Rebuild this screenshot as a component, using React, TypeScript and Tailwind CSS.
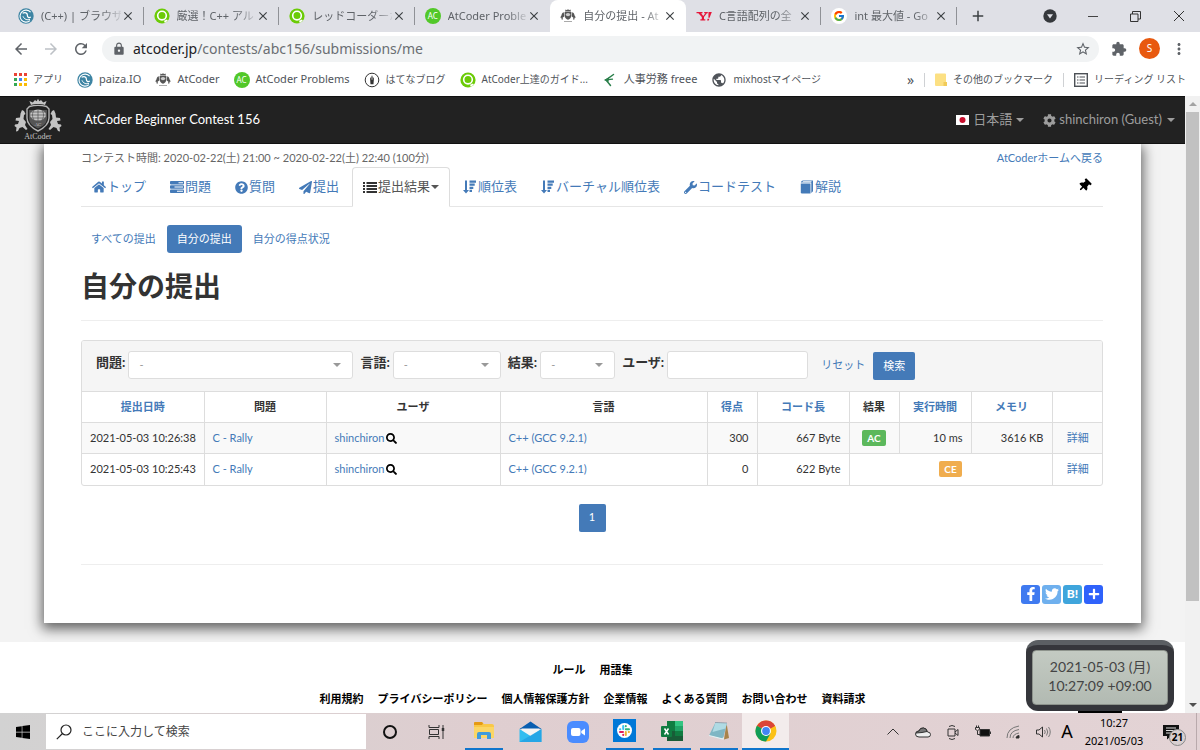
import type { ReactNode } from "react";
import { FaCog, FaHome, FaPaperPlane, FaPlus, FaQuestionCircle, FaSearch, FaTwitter, FaFacebookF, FaWindows, FaWrench, FaThumbtack } from "react-icons/fa";
import { FcGoogle } from "react-icons/fc";
import { MdArrowBack, MdArrowForward, MdClose, MdExtension, MdLock, MdMoreVert, MdRefresh, MdStarBorder, MdPublic, MdAdd } from "react-icons/md";

/* ---------- small drawings ---------- */

function PaizaIcon() {
  return (
    <svg viewBox="0 0 16 16" className="size-4 shrink-0" aria-hidden="true">
      <circle cx="8" cy="8" r="7.7" fill="#3d84a3" />
      <path d="M12.600 4.200A6 6 0 1 0 12 12.600" fill="none" stroke="#fff" strokeWidth="1.100" />
      <path d="M4.600 5.300C7 3.800 9.600 4.800 9.400 7.400c-.1 2 1.400 2.600 3.400 1.800" fill="none" stroke="#fff" strokeWidth="1.300" />
      <path d="M5 8.300c1.200 3 4.200 4.200 7 3" fill="none" stroke="#fff" strokeWidth="1" />
    </svg>
  );
}

function GreenRingIcon() {
  return (
    <svg viewBox="0 0 16 16" className="size-4 shrink-0" aria-hidden="true">
      <circle cx="8" cy="8" r="7.600" fill="#6bcb06" />
      <circle cx="8" cy="7.600" r="4.300" fill="none" stroke="#fff" strokeWidth="1.600" />
      <path d="M10 12.800l3-1.200.8 1.200-3 2.200z" fill="#fff" />
    </svg>
  );
}

function AcIcon() {
  return (
    <span className="flex size-4 shrink-0 items-center justify-center rounded-full bg-[#52c829] text-[8px] leading-none text-white">AC</span>
  );
}

function YahooIcon() {
  return (
    <svg viewBox="0 0 16 16" className="size-4 shrink-0" aria-hidden="true" fill="#e6163a">
      <path d="M.5 4h6v1.200H5.200L7.200 8l2.200-2.800H8.200V4h3.600v1.200h-.9L8 8.900v2.300h1.300v1.200H4.400v-1.200h1.400V8.900L2.400 5.200H.5z" />
      <path d="M12.500 4h3.300l-2.200 5.800h-1.200z" />
      <path d="M11.600 10.700h1.700l-.5 1.700h-1.700z" />
    </svg>
  );
}

function CrestIcon() {
  return (
    <svg viewBox="0 0 16 16" className="size-4 shrink-0" aria-hidden="true" fill="#555">
      <path d="M5 3.400L5.600 1.600 7 2.200 8 1l1 1.200 1.400-.6.6 1.800z" />
      <path d="M4.600 4h6.800v3.400c0 2.400-1.800 3.800-3.400 4.400-1.600-.6-3.400-2-3.400-4.400z" />
      <ellipse cx="8" cy="6.600" rx="2.200" ry="1.600" fill="#ccc" />
      <path d="M3.800 4.200c-1.800.2-2 2-2.400 3.200L.2 9.600l1.200.2.2 1.800 1.400-.2-.4-1.600 1.600-1.400zM12.200 4.200c1.800.2 2 2 2.400 3.200l1.200 2.200-1.200.2-.2 1.800-1.400-.2.4-1.600-1.600-1.400z" />
      <path d="M4 13h8v1H4z" fill="#aaa" />
    </svg>
  );
}

function PenIcon() {
  return (
    <svg viewBox="0 0 16 16" className="size-4 shrink-0" aria-hidden="true">
      <circle cx="8" cy="8" r="6.800" fill="none" stroke="#333" strokeWidth="1" />
      <path d="M8 3.200l1.900 3.400-.4 5.600h-3l-.4-5.600z" fill="#333" />
      <path d="M8 3.600v4.200" stroke="#fff" strokeWidth=".7" />
    </svg>
  );
}

function FreeeIcon() {
  return (
    <svg viewBox="0 0 16 16" className="size-4 shrink-0" aria-hidden="true" fill="none" stroke="#2a7f4a" strokeLinecap="round">
      <path d="M11.500 2.500L4 8l4.500 5.500" strokeWidth="1.500" />
      <path d="M4 7.800l6.500-.6" strokeWidth="1.200" />
      <path d="M1.800 8L7 5.600 6.500 10z" fill="#2a7f4a" stroke="none" />
    </svg>
  );
}

function AppsIcon() {
  const colors = ["#ea4335", "#ea4335", "#ea4335", "#34a853", "#4285f4", "#fbbc05", "#34a853", "#fbbc05", "#fbbc05"];
  return (
    <svg viewBox="0 0 13 13" className="size-[13px] shrink-0" aria-hidden="true">
      {colors.map((c, i) => (
        <rect key={i} x={(i % 3) * 5} y={Math.floor(i / 3) * 5} width="3" height="3" fill={c} />
      ))}
    </svg>
  );
}

function AtCoderLogo() {
  return (
    <svg viewBox="0 0 48 44" className="h-11 w-12" role="img" aria-label="AtCoder" fill="#c4c4c4">
      <path d="M17 7l-1.600-4 3.400 1.600L21 2l1.600 1.200L24 .8l1.400 2.400L27 2l2.200 2.600L32.600 3 31 7c-4-1.200-10-1.200-14 0z" />
      <path d="M15.500 8.500c5-1.300 12-1.300 17 0l2.500 2.500v9c0 7-6 10.500-11 13-5-2.500-11-6-11-13v-9z" fill="#222" stroke="#b5b5b5" strokeWidth="1.400" />
      <path d="M15 12h18v8c0 6-5 8.500-9 10.500-4-2-9-4.500-9-10.500z" fill="#555" />
      <ellipse cx="24" cy="17" rx="8" ry="5.600" />
      <path d="M16 17h16M17 14h14M17 20h14M24 11v12M20 12c-2 3-2 7 0 10M28 12c2 3 2 7 0 10" fill="none" stroke="#444" strokeWidth=".6" />
      <text x="24" y="28" textAnchor="middle" fontSize="5" fontFamily="Liberation Serif, serif" fontStyle="italic">AC</text>
      <path d="M8 12l2 1 1.500 3-1.500 1-.5 4 2.500 3-1 3 2.500 4-1.500 1-3.500-3-3 1-1.500 3-2 .5.500-4L.5 28l.5-1.500L4 26l1-3-3.500-.5L2 20l4-.5.500-4z" />
      <path d="M40 12l-2 1-1.500 3 1.500 1 .5 4-2.500 3 1 3-2.500 4 1.500 1 3.500-3 3 1 1.500 3 2 .5-.5-4 2-1.500-.5-1.500-3-.5-1-3 3.500-.5-.5-2.500-4-.5-.5-4z" />
      <text x="24" y="41" textAnchor="middle" fontSize="8" fontFamily="Liberation Serif, serif">AtCoder</text>
    </svg>
  );
}

function TasksIcon() {
  return (
    <svg viewBox="0 0 14 12" className="h-3 w-3.5" aria-hidden="true" fill="currentColor">
      <rect width="14" height="3.400" rx=".8" />
      <rect y="4.300" width="14" height="3.400" rx=".8" />
      <rect y="8.600" width="14" height="3.400" rx=".8" />
      <path d="M8.500 1.200H13v1H8.500zM4.500 5.500H13v1H4.500zM7 9.800h6v1H7z" fill="#fff" />
    </svg>
  );
}

function ListIcon() {
  return (
    <svg viewBox="0 0 14 13" className="h-[13px] w-3.5" aria-hidden="true" fill="currentColor">
      <path d="M0 1h2v2H0zM0 4h2v2H0zM0 7h2v2H0zM0 10h2v2H0zM3.500 1H14v2H3.500zM3.500 4H14v2H3.500zM3.500 7H14v2H3.500zM3.500 10H14v2H3.500z" />
    </svg>
  );
}

function SortIcon() {
  return (
    <svg viewBox="0 0 14 14" className="size-3.5" aria-hidden="true" fill="currentColor">
      <path d="M2 .5h2V10h2L3 13.500 0 10h2zM6.500.5H13v2.200H6.500zM6.500 3.600h5.200v2.200H6.500zM6.500 6.700h3.800v2.200H6.500zM6.500 9.800H9V12H6.500z" />
    </svg>
  );
}

function BookIcon() {
  return (
    <svg viewBox="0 0 14 14" className="size-3.5" aria-hidden="true" fill="currentColor">
      <path d="M.8 3.400h9.700v10.100H2Q.8 13.500.8 12.300z" />
      <path d="M.8 2.600Q1.400.5 3 .5h10v10.700l-1.700 1.700V2.600z" />
      <path d="M2.200 2.300L3.200 1.300h8.600L11 2.300z" fill="#fff" />
    </svg>
  );
}

function Caret() {
  return (
    <svg viewBox="0 0 8 4" className="h-1 w-2 shrink-0" aria-hidden="true" fill="currentColor">
      <path d="M0 0h8L4 4z" />
    </svg>
  );
}

/* ---------- browser ---------- */

type Tab = { icon: ReactNode; title: string; active?: boolean };

const tabs: Tab[] = [
  { icon: <PaizaIcon />, title: "(C++) | ブラウザ" },
  { icon: <GreenRingIcon />, title: "厳選！C++ アル" },
  { icon: <GreenRingIcon />, title: "レッドコーダーが教" },
  { icon: <AcIcon />, title: "AtCoder Proble" },
  { icon: <CrestIcon />, title: "自分の提出 - At", active: true },
  { icon: <YahooIcon />, title: "C言語配列の全" },
  { icon: <span className="shrink-0 rounded-full bg-white p-0.5"><FcGoogle className="size-3" /></span>, title: "int 最大値 - Go" },
];

function TabStrip() {
  return (
    <div className="flex h-8 items-stretch bg-[#dfe0e6] pl-2">
      <div className="flex w-[949px] min-w-0" role="tablist">
        {tabs.map((t, i) => (
          <div
            key={i}
            role="tab"
            aria-selected={!!t.active}
            className={
              "flex min-w-0 flex-1 items-center pl-2.5 " +
              (t.active ? "rounded-t-lg bg-white" : "")
            }
          >
            {t.icon}
            <span className="ml-[7px] min-w-0 flex-1 overflow-hidden text-[11px] whitespace-nowrap text-[#5f6368] [mask-image:linear-gradient(to_right,#000_75%,rgba(0,0,0,0.15))]">
              {t.title}
            </span>
            <button aria-label="閉じる" className="mr-2 flex size-3.5 items-center justify-center text-[#3c4043]">
              <MdClose className="size-3.5" />
            </button>
            <span className={"h-[18px] w-px " + (t.active || i === 3 ? "bg-transparent" : "bg-[#8f9196]")} />
          </div>
        ))}
      </div>
      <button aria-label="新しいタブ" className="ml-3 text-[#3c4043]">
        <MdAdd className="size-[18px]" />
      </button>
      <div className="ml-auto flex items-center">
        <button aria-label="タブを検索" className="mr-3.5">
          <svg viewBox="0 0 14 14" className="size-3.5">
            <circle cx="7" cy="7" r="6.700" fill="#35383c" />
            <path d="M4 5.300h6L7 9.400z" fill="#dfe0e6" />
          </svg>
        </button>
        <button aria-label="最小化" className="flex h-7 w-[43px] items-center justify-center">
          <span className="h-px w-2.5 bg-[#444]" />
        </button>
        <button aria-label="元に戻す" className="flex h-7 w-[43px] items-center justify-center">
          <svg viewBox="0 0 11 11" className="size-[11px]" fill="none" stroke="#333">
            <path d="M.5 3h7.500v7.500H.5zM2.500 3V.5h8V8H8" />
          </svg>
        </button>
        <button aria-label="閉じる" className="flex h-7 w-[43px] items-center justify-center">
          <svg viewBox="0 0 10 10" className="size-2.5" fill="none" stroke="#333">
            <path d="M0 0l10 10M10 0L0 10" />
          </svg>
        </button>
      </div>
    </div>
  );
}

function Toolbar() {
  return (
    <div className="flex h-[33px] items-center bg-white px-3 text-[#5f6368]">
      <button aria-label="戻る" className="mr-3"><MdArrowBack className="size-[18px]" /></button>
      <button aria-label="進む" className="mr-3 text-[#bdc1c6]"><MdArrowForward className="size-[18px]" /></button>
      <button aria-label="再読み込み" className="mr-3"><MdRefresh className="size-[18px]" /></button>
      <div className="flex h-[26px] flex-1 items-center rounded-full bg-[#f1f3f4] pr-2 pl-2.5">
        <MdLock className="size-3.5" />
        <a href="#url" className="ml-[7px] text-sm text-[#6a6e73]">
          <span className="text-[#202124]">atcoder.jp</span>/contests/abc156/submissions/me
        </a>
        <button aria-label="ブックマークに追加" className="ml-auto"><MdStarBorder className="size-4" /></button>
      </div>
      <button aria-label="拡張機能" className="ml-3"><MdExtension className="size-4" /></button>
      <button className="ml-3 flex size-[21px] items-center justify-center rounded-full bg-[#e8590f] text-[10px] text-white">S</button>
      <button aria-label="メニュー" className="ml-2.5"><MdMoreVert className="size-[18px]" /></button>
    </div>
  );
}

function Bookmark({ icon, small, children }: { icon: ReactNode; small?: boolean; children: ReactNode }) {
  return (
    <a href="#bookmark" className={"flex shrink-0 items-center gap-1.5 whitespace-nowrap " + (small ? "text-[10px]" : "text-[11px]")}>
      {icon}
      {children}
    </a>
  );
}

function BookmarkBar() {
  return (
    <div className="flex h-[31px] items-center bg-white pr-3.5 pb-0.5 pl-3.5 text-[#50545a]">
      <div className="flex min-w-0 flex-1 items-center gap-3.5 overflow-hidden">
        <Bookmark small icon={<AppsIcon />}>アプリ</Bookmark>
        <Bookmark icon={<PaizaIcon />}>paiza.IO</Bookmark>
        <Bookmark icon={<CrestIcon />}>AtCoder</Bookmark>
        <Bookmark icon={<AcIcon />}>AtCoder Problems</Bookmark>
        <Bookmark small icon={<PenIcon />}>はてなブログ</Bookmark>
        <Bookmark small icon={<GreenRingIcon />}>AtCoder上達のガイド...</Bookmark>
        <Bookmark icon={<FreeeIcon />}>人事労務 freee</Bookmark>
        <Bookmark small icon={<MdPublic className="size-4" />}>mixhostマイページ</Bookmark>
      </div>
      <span className="mr-2.5 text-sm">»</span>
      <div className="flex items-center gap-2.5">
        <span className="h-3.5 w-px bg-[#cfd1d4]" />
        <Bookmark
          small
          icon={
            <svg viewBox="0 0 12 14" className="h-3.5 w-3">
              <path d="M0 1.500Q0 .5 1 .5h9q1 0 1 1V9h1v4H1q-1 0-1-1z" fill="#fce083" />
              <path d="M8.500 9H12v4H8.500z" fill="#f1cb58" />
            </svg>
          }
        >
          その他のブックマーク
        </Bookmark>
        <span className="h-3.5 w-px bg-[#cfd1d4]" />
        <Bookmark
          small
          icon={
            <svg viewBox="0 0 14 14" className="size-3.5" fill="none" stroke="#4d5156">
              <rect x=".7" y=".7" width="12.600" height="12.600" strokeWidth="1.400" />
              <path d="M3 4h1.500M3 7h1.500M3 10h1.500M5.500 4H11M5.500 7H11M5.500 10H11" strokeWidth="1.200" />
            </svg>
          }
        >
          リーディング リスト
        </Bookmark>
      </div>
    </div>
  );
}

/* ---------- site ---------- */

function SiteHeader() {
  return (
    <header className="flex h-12 shrink-0 items-center border-y border-[#111] bg-[#222] pr-2.5 pl-3.5">
      <a href="#home"><AtCoderLogo /></a>
      <a href="#contest" className="ml-[22px] text-[13px] text-white">AtCoder Beginner Contest 156</a>
      <div className="ml-auto flex items-center gap-[19px] text-[13px] text-[#9d9d9d]">
        <button className="flex items-center gap-1">
          <svg viewBox="0 0 13 10" className="h-2.5 w-[13px]">
            <rect width="13" height="10" fill="#fff" />
            <circle cx="6.500" cy="5" r="3" fill="#c8102e" />
          </svg>
          日本語
          <Caret />
        </button>
        <button className="flex items-center gap-[3px]">
          <FaCog className="size-[13px]" />
          shinchiron (Guest)
          <span className="ml-0.5 flex"><Caret /></span>
        </button>
      </div>
    </header>
  );
}

const menu: { icon: ReactNode; label: string; active?: boolean }[] = [
  { icon: <FaHome className="size-3.5" />, label: "トップ" },
  { icon: <TasksIcon />, label: "問題" },
  { icon: <FaQuestionCircle className="size-[13px]" />, label: "質問" },
  { icon: <FaPaperPlane className="size-[13px]" />, label: "提出" },
  { icon: <ListIcon />, label: "提出結果", active: true },
  { icon: <SortIcon />, label: "順位表" },
  { icon: <SortIcon />, label: "バーチャル順位表" },
  { icon: <FaWrench className="size-[13px]" />, label: "コードテスト" },
  { icon: <BookIcon />, label: "解説" },
];

function ContestMenu() {
  return (
    <nav className="flex h-10 items-end border-b border-[#e6e6e6] text-[13px]">
      {menu.map((m) => (
        <a
          key={m.label}
          href="#menu"
          className={
            "mr-0.5 -mb-px flex h-10 items-center gap-px rounded-t border px-2.5 whitespace-nowrap " +
            (m.active
              ? "border-[#ddd] border-b-white bg-white text-[#555]"
              : "border-transparent text-[#447ab8]")
          }
        >
          <span className={m.active ? "text-[#333]" : "text-[#447ab8]"}>{m.icon}</span>
          {m.label}
          {m.active && <Caret />}
        </a>
      ))}
      <button aria-label="固定" className="mr-3 mb-3.5 ml-auto text-black">
        <FaThumbtack className="size-[13px] rotate-45" />
      </button>
    </nav>
  );
}

function FilterSelect({ id, label, width }: { id: string; label: string; width: string }) {
  return (
    <div className="flex items-start gap-[3px]">
      <label htmlFor={id} className="pt-0.5 text-[13px] font-bold">{label}:</label>
      <div className={"relative " + width}>
        <select id={id} className="h-7 w-full appearance-none rounded-[3px] border border-[#ddd] bg-white pl-2.5 text-[11px] text-[#999]">
          <option>-</option>
        </select>
        <span className="pointer-events-none absolute inset-y-0 right-3 flex items-center text-[#999]"><Caret /></span>
      </div>
    </div>
  );
}

function Filters() {
  return (
    <form className="flex h-[50px] items-start gap-[7px] bg-[#f5f5f5] pt-2.5 pl-3.5" onSubmit={(e) => e.preventDefault()}>
      <FilterSelect id="task" label="問題" width="w-[225px]" />
      <FilterSelect id="language" label="言語" width="w-[108px]" />
      <FilterSelect id="status" label="結果" width="w-[75px]" />
      <div className="flex items-start gap-[3px]">
        <label htmlFor="user" className="pt-0.5 text-[13px] font-bold">ユーザ:</label>
        <input id="user" type="text" className="h-7 w-[141px] rounded-[3px] border border-[#ddd] bg-white px-2 text-[11px]" />
      </div>
      <a href="#reset" className="ml-1.5 pt-1.5 text-[11px] text-[#447ab8]">リセット</a>
      <button className="mt-px ml-px h-7 rounded-[2px] bg-[#447ab8] px-2.5 text-[11px] text-white">検索</button>
    </form>
  );
}

const cell = "border-l border-[#ddd] px-2 first:border-l-0";

function SubmissionTable() {
  const link = "text-[#447ab8]";
  const heads: [string, boolean][] = [
    ["提出日時", true], ["問題", false], ["ユーザ", false], ["言語", false], ["得点", true],
    ["コード長", true], ["結果", false], ["実行時間", true], ["メモリ", true], ["", false],
  ];
  const rows = [
    { time: "2021-05-03 10:26:38", score: "300", size: "667 Byte", ok: true },
    { time: "2021-05-03 10:25:43", score: "0", size: "622 Byte", ok: false },
  ];
  return (
    <table className="w-full table-fixed text-[11px] whitespace-nowrap">
      <colgroup>
        <col className="w-[122px]" />
        <col className="w-[122px]" />
        <col className="w-[174px]" />
        <col className="w-[207px]" />
        <col className="w-[50px]" />
        <col className="w-[92px]" />
        <col className="w-[50px]" />
        <col className="w-[72px]" />
        <col className="w-[81px]" />
        <col className="w-[51px]" />
      </colgroup>
      <thead>
        <tr className="h-[31px] border-t border-[#ddd]">
          {heads.map(([h, sortable], i) => (
            <th key={i} className={cell}>
              {sortable ? <a href="#sort" className={link}>{h}</a> : h}
            </th>
          ))}
        </tr>
      </thead>
      <tbody>
        {rows.map((r) => (
          <tr key={r.time} className="h-[31px] border-t border-[#ddd] odd:bg-[#f9f9f9]">
            <td className={cell}>{r.time}</td>
            <td className={cell}><a href="#task" className={link}>C - Rally</a></td>
            <td className={cell}>
              <span className="flex items-center gap-0.5">
                <a href="#user" className={link}>shinchiron</a>
                <FaSearch className="size-[11px] text-black" />
              </span>
            </td>
            <td className={cell}><a href="#lang" className={link}>C++ (GCC 9.2.1)</a></td>
            <td className={cell + " text-right"}>{r.score}</td>
            <td className={cell + " text-right"}>{r.size}</td>
            {r.ok ? (
              <>
                <td className={cell + " text-center"}>
                  <span className="inline-block rounded-[2px] bg-[#5cb85c] px-[5px] text-[10px] leading-4 font-bold text-white">AC</span>
                </td>
                <td className={cell + " text-right"}>10 ms</td>
                <td className={cell + " text-right"}>3616 KB</td>
              </>
            ) : (
              <td colSpan={3} className={cell + " text-center"}>
                <span className="inline-block rounded-[2px] bg-[#f0ad4e] px-[5px] text-[10px] leading-4 font-bold text-white">CE</span>
              </td>
            )}
            <td className={cell + " text-center"}><a href="#detail" className={link}>詳細</a></td>
          </tr>
        ))}
      </tbody>
    </table>
  );
}

function Share() {
  const box = "flex size-[19px] items-center justify-center rounded-[3px] text-white";
  return (
    <div className="flex justify-end gap-0.5">
      <a href="#facebook" aria-label="Facebook" className={box + " bg-[#3f7af0]"}><FaFacebookF className="size-3.5" /></a>
      <a href="#twitter" aria-label="Twitter" className={box + " bg-[#6fb0ee]"}><FaTwitter className="size-3.5" /></a>
      <a href="#hatena" className={box + " bg-[#3fa5dc] text-[12px] font-black"}>B!</a>
      <a href="#more" aria-label="共有" className={box + " bg-[#2f62fb]"}><FaPlus className="size-3" /></a>
    </div>
  );
}

function Main() {
  return (
    <main className="mx-11 bg-white pr-[38px] pl-[37px] shadow-[0_4px_12px_2px_rgba(0,0,0,0.6)]">
      <div className="flex h-[23px] items-center justify-between pt-1.5 text-[11px]">
        <span className="text-[#666]">コンテスト時間: 2020-02-22(土) 21:00 ~ 2020-02-22(土) 22:40 (100分)</span>
        <a href="#home" className="text-[#447ab8]">AtCoderホームへ戻る</a>
      </div>
      <ContestMenu />
      <div className="mt-[18px] flex h-7 items-stretch gap-px text-[11px] text-[#447ab8]">
        <a href="#all" className="flex items-center px-2.5">すべての提出</a>
        <a href="#mine" className="flex items-center rounded-[3px] bg-[#447ab8] px-2.5 text-white">自分の提出</a>
        <a href="#score" className="flex items-center px-2.5">自分の得点状況</a>
      </div>
      <h1 className="mt-[15px] text-[28px] leading-9 font-bold text-[#333]">自分の提出</h1>
      <hr className="mt-4 border-[#eee]" />
      <section className="mt-[19px] overflow-hidden rounded-[3px] border border-[#ddd]">
        <Filters />
        <SubmissionTable />
      </section>
      <div className="mt-[18px] flex justify-center">
        <a href="#page" className="flex h-7 w-[27px] items-center justify-center rounded-[2px] bg-[#447ab8] text-[11px] text-white">1</a>
      </div>
      <hr className="mt-8 mb-5 border-[#eee]" />
      <Share />
      <div className="h-[19px]" />
    </main>
  );
}

function Footer() {
  const rows = [
    ["ルール", "用語集"],
    ["利用規約", "プライバシーポリシー", "個人情報保護方針", "企業情報", "よくある質問", "お問い合わせ", "資料請求"],
  ];
  return (
    <footer className="flex-1 bg-white pt-5 text-[11px] font-bold text-black">
      {rows.map((r, i) => (
        <div key={i} className="mb-[11px] flex h-[18px] items-center justify-center gap-3.5">
          {r.map((l) => <a key={l} href="#footer">{l}</a>)}
        </div>
      ))}
    </footer>
  );
}

function DeskClock() {
  return (
    <div className="absolute right-[26px] bottom-0 flex flex-col items-center">
      <div className="rounded-[12px] border-t-[5px] border-[#5b5f63] bg-[#35363b] p-1.5 pt-[5px]">
        <div className="flex h-[55px] w-[136px] flex-col items-center justify-center rounded-[4px] border border-[#8d938c] bg-linear-to-b from-[#c3cac2] to-[#b2bab2] pb-1 text-sm leading-[19px] text-[#444]">
          <span>2021-05-03 (月)</span>
          <span>10:27:09 +09:00</span>
        </div>
      </div>
      <div className="h-0.5 w-11 bg-black" />
    </div>
  );
}

function ScrollBar() {
  return (
    <div className="flex w-[15px] shrink-0 flex-col items-center bg-[#f1f1f1] pt-1.5" aria-hidden="true">
      <svg viewBox="0 0 8 4" className="h-1 w-2" fill="#a3a3a3"><path d="M0 4h8L4 0z" /></svg>
      <div className="mt-1.5 h-4/5 w-[13px] bg-[#c1c1c1]" />
      <span className="mt-auto pb-1.5 text-[#505050]"><Caret /></span>
    </div>
  );
}

/* ---------- taskbar ---------- */

const apps: { name: string; icon: ReactNode; state?: "open" | "active" }[] = [
  { name: "Cortana", icon: <svg viewBox="0 0 16 16" className="size-4"><circle cx="8" cy="8" r="6" fill="none" stroke="#111" strokeWidth="2" /></svg> },
  {
    name: "タスク ビュー",
    icon: (
      <svg viewBox="0 0 17 16" className="h-4 w-[17px]" fill="none" stroke="#333">
        <path d="M1 1v2.500h10V1M1 15v-2.500h10V15M1.500 5.500h9v5h-9zM15 1v3M15 7v8" />
        <path d="M15 4v3" strokeWidth="2.500" />
      </svg>
    ),
  },
  {
    name: "エクスプローラー",
    state: "open",
    icon: (
      <svg viewBox="0 0 22 20" className="h-5 w-[22px]">
        <path d="M1 3q0-2 2-2h6l2 2h8q2 0 2 2v12H1z" fill="#f9c846" />
        <path d="M1 2q0-1 1-1h7l1 1.500-1 1.500H1z" fill="#e59a13" />
        <path d="M1 6h20v11H1z" fill="#fbd665" />
        <path d="M4 18v-5q0-2 2-2h10q2 0 2 2v5h-4v-4H8v4z" fill="#3f9bdc" />
      </svg>
    ),
  },
  {
    name: "メール",
    icon: (
      <svg viewBox="0 0 23 22" className="h-[22px] w-[23px]">
        <path d="M.5 8L11.500.5 22.500 8z" fill="#0a5eb0" />
        <path d="M2.500 7.500h18v9h-18z" fill="#f4f4f4" />
        <path d="M.5 8l11 7 11-7v13H.5z" fill="#32bdf0" />
        <path d="M.5 21l22-13v13z" fill="#1a96e0" opacity=".6" />
      </svg>
    ),
  },
  {
    name: "Zoom",
    icon: (
      <svg viewBox="0 0 22 22" className="size-[22px]">
        <rect width="22" height="22" rx="6" fill="#4a8cff" />
        <rect x="4" y="7" width="9.500" height="8" rx="2" fill="#fff" />
        <path d="M14.300 10L18 7.500v7L14.300 12z" fill="#fff" />
      </svg>
    ),
  },
  {
    name: "Slack",
    state: "open",
    icon: (
      <svg viewBox="0 0 23 23" className="size-[23px]">
        <path d="M0 0h23v23H0z" fill="#0078d7" />
        <circle cx="11.500" cy="11.500" r="7.500" fill="#fff" />
        <g fill="none" strokeWidth="2" strokeLinecap="round">
          <path d="M10.200 7v3M7 10.200h.3" stroke="#36c5f0" />
          <path d="M12.800 10.200H16M12.800 7v.3" stroke="#2eb67d" />
          <path d="M12.800 13v3M16 13h-.3" stroke="#ecb22e" />
          <path d="M7 13h3M10.200 16v-.3" stroke="#e01e5a" />
        </g>
      </svg>
    ),
  },
  {
    name: "Excel",
    state: "open",
    icon: (
      <svg viewBox="0 0 22 20" className="h-5 w-[22px]">
        <path d="M6 0h16v20H6z" fill="#21a366" />
        <path d="M6 0h8v10H6z" fill="#107c41" />
        <path d="M6 10h8v10H6z" fill="#185c37" />
        <path d="M14 0h8v5h-8z" fill="#33c481" />
        <path d="M14 10h8v5h-8z" fill="#107c41" />
        <path d="M14 15h8v5h-8z" fill="#185c37" />
        <rect y="5" width="11" height="11" rx="1" fill="#107c41" />
        <path d="M3.500 7.500l4 6M7.500 7.500l-4 6" stroke="#fff" strokeWidth="1.500" />
      </svg>
    ),
  },
  {
    name: "メモ帳",
    state: "open",
    icon: (
      <svg viewBox="0 0 22 20" className="h-5 w-[22px]">
        <path d="M18.500 2l2.500 15-5 1.500z" fill="#a8834a" />
        <path d="M7.500 1.500l11.500.5-4 16L1 14.500z" fill="#7fb6c4" />
        <path d="M7.500 1.500l11.500.5-1.500 5.500L4.500 11z" fill="#b0dbe4" />
        <path d="M1 14.500l14 3.500.5-1.500" fill="none" stroke="#e2f1f3" strokeWidth="1.200" />
        <path d="M7.500 1.500l11.500.5" stroke="#778" strokeDasharray="1 1" />
      </svg>
    ),
  },
  {
    name: "Chrome",
    state: "active",
    icon: (
      <svg viewBox="0 0 22 22" className="size-[22px]">
        <circle cx="11" cy="11" r="10.500" fill="#fbc116" />
        <path d="M11 11L1.900 5.750A10.500 10.500 0 0 1 20.100 5.750z" fill="#db4437" />
        <path d="M20.100 5.750H11v5z" fill="#db4437" />
        <path d="M1.900 5.750A10.500 10.500 0 0 0 11 21.500l4.500-8L11 11z" fill="#0f9d58" />
        <circle cx="11" cy="11" r="5" fill="#fff" />
        <circle cx="11" cy="11" r="3.900" fill="#4285f4" />
      </svg>
    ),
  },
];

function TrayIcon({ label, children }: { label: string; children: ReactNode }) {
  return (
    <button aria-label={label} className="flex w-[30px] items-center justify-center">
      <svg viewBox="0 0 16 16" className="size-4" fill="none" stroke="#333">{children}</svg>
    </button>
  );
}

function TaskBar() {
  return (
    <div className="flex h-[37px] shrink-0 items-stretch bg-linear-to-r from-[#d2d2d2] via-[#dfced0] via-40% to-[#e3d3d5] text-black">
      <button aria-label="スタート" className="flex w-[46px] items-center justify-center">
        <FaWindows className="size-4" />
      </button>
      <label className="my-px flex w-80 items-center gap-2.5 bg-white px-2.5">
        <svg viewBox="0 0 16 16" className="size-4" fill="none" stroke="#222" strokeWidth="1.200">
          <circle cx="10" cy="6" r="5" />
          <path d="M6.500 9.500L.8 15.200" />
        </svg>
        <input type="text" aria-label="検索" placeholder="ここに入力して検索" className="min-w-0 flex-1 text-[12px] outline-none placeholder:text-[#444]" />
      </label>
      {apps.map((a) => (
        <button
          key={a.name}
          aria-label={a.name}
          className={"flex w-[47px] flex-col items-center justify-between " + (a.state === "active" ? "bg-[#f3ecec]" : "")}
        >
          <span className="flex flex-1 items-center">{a.icon}</span>
          {a.state && <span className={"h-0.5 bg-[#0f75cc] " + (a.state === "active" ? "w-full" : "w-[38px]")} />}
        </button>
      ))}
      <div className="ml-auto flex items-stretch">
        <TrayIcon label="隠れているインジケーター"><path d="M2.500 10.500L8 5l5.500 5.500" /></TrayIcon>
        <TrayIcon label="OneDrive">
          <path d="M4 13q-3.500 0-3.500-3T4 7q1-3.500 4.500-3T12.500 8q3 0 3 2.500T13 13z" fill="#eee" />
          <path d="M1 9q1-2 3-2 1-3.500 4.500-3T12 7.500L7 8.500z" fill="#777" />
        </TrayIcon>
        <TrayIcon label="会議"><path d="M3 5h7v7H3zM10 8l3-2.500v6L10 9M4 2.500q3-2 6 0M4 14.500q3 2 6 0" /></TrayIcon>
        <TrayIcon label="電源">
          <path d="M5 5.500h9.500v6.500H5z" fill="#111" />
          <path d="M15.500 7.500v2.500M.5 3.500h4v2q-2 2-4 0zM1.500 1.500v2M3.500 1.500v2M2.500 7v3.500H5" />
        </TrayIcon>
        <TrayIcon label="ネットワーク">
          <path d="M2 14Q2 4 14 2M5 14q0-7 9-8.500M8 14q0-4 6-5" stroke="#777" />
          <path d="M11 14q0-2 3-2.500v2.500z" fill="#222" />
        </TrayIcon>
        <TrayIcon label="音量">
          <path d="M1.500 6H4l3.500-3v10L4 10H1.500z" />
          <path d="M9.500 6q1.500 2 0 4M11.500 4.500q2.500 3.500 0 7M13.500 3q3.500 5 0 10" stroke="#777" />
        </TrayIcon>
        <button className="w-[18px] text-[18px]">A</button>
        <button className="flex w-[76px] flex-col items-center justify-center text-[11px] leading-[18px]">
          <span>10:27</span>
          <span>2021/05/03</span>
        </button>
        <button aria-label="通知" className="relative flex w-[38px] items-center justify-center">
          <svg viewBox="0 0 16 16" className="size-4">
            <path d="M0 1h16v11H8l-4 3.500V12H0z" fill="#111" />
            <path d="M3 4h10M3 6.500h10M3 9h7" stroke="#ddd" />
          </svg>
          <span className="absolute right-1 bottom-1 flex size-[17px] items-center justify-center rounded-full border border-[#888] bg-[#d8cfd0] text-[10px] font-bold">21</span>
        </button>
        <span className="mr-[3px] ml-1.5 w-px bg-[#b9aaac]" />
      </div>
    </div>
  );
}

export default function App() {
  return (
    <div className="flex h-screen flex-col overflow-hidden bg-white font-['Noto_Sans','Noto_Sans_CJK_JP',sans-serif]">
      <TabStrip />
      <Toolbar />
      <BookmarkBar />
      <div className="relative flex min-h-0 flex-1 font-['Lato','Noto_Sans_CJK_JP',sans-serif] text-[#333]">
        <div className="flex min-w-0 flex-1 flex-col overflow-hidden">
          <SiteHeader />
          <div className="shrink-0 overflow-hidden bg-[#f3f3f3] pb-[19px]">
            <Main />
          </div>
          <Footer />
        </div>
        <ScrollBar />
        <DeskClock />
      </div>
      <TaskBar />
    </div>
  );
}
